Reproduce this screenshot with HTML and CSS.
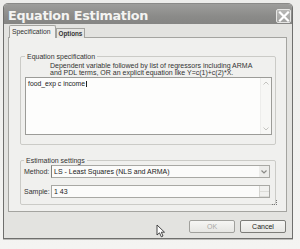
FILE: index.html
```html
<!DOCTYPE html>
<html>
<head>
<meta charset="utf-8">
<link rel="stylesheet" href="styles.css">
</head>
<body>
<div class="stage">
  <div class="window">
    <div class="titlebar">
      <span class="title">Equation Estimation</span>
      <span class="close"><svg width="12" height="11" viewBox="0 0 12 11"><path d="M2 1.5 L10 9.5 M10 1.5 L2 9.5" stroke="#fff" stroke-width="2.2" stroke-linecap="square"/></svg></span>
    </div>
    <div class="body">
      <div class="tabs">
        <div class="tab active">Specification</div>
        <div class="tab">Options</div>
      </div>
      <div class="panel">
        <fieldset class="group g1">
          <legend>Equation specification</legend>
          <p class="desc">Dependent variable followed by list of regressors including ARMA<br>and PDL terms, OR an explicit equation like Y=c(1)+c(2)*X.</p>
          <div class="textarea">
            <span class="val">food_exp c income<span class="caret"></span></span>
            <div class="vscroll">
              <svg width="8" height="6" viewBox="0 0 8 6"><path d="M1.5 4.5 L4 2 L6.5 4.5" fill="none" stroke="#c4c4c0" stroke-width="1"/></svg>
              <svg width="8" height="6" viewBox="0 0 8 6"><path d="M1.5 1.5 L4 4 L6.5 1.5" fill="none" stroke="#c4c4c0" stroke-width="1"/></svg>
            </div>
          </div>
        </fieldset>
        <fieldset class="group g2">
          <legend>Estimation settings</legend>
          <div class="row">
            <span class="lbl">Method:</span>
            <div class="select"><span class="val">LS - Least Squares (NLS and ARMA)</span>
              <span class="drop"><svg width="8" height="6" viewBox="0 0 8 6"><path d="M1.5 1.5 L4 4 L6.5 1.5" fill="none" stroke="#8a8a86" stroke-width="1.2"/></svg></span>
            </div>
          </div>
          <div class="row r2">
            <span class="lbl">Sample:</span>
            <div class="input"><span class="val">1 43</span>
              <span class="spin"><span></span><span></span></span>
            </div>
          </div>
        </fieldset>
        <span class="grip"></span>
      </div>
      <div class="buttons">
        <div class="btn disabled">OK</div>
        <div class="btn">Cancel</div>
      </div>
    </div>
  </div>
  <svg class="pointer" width="10" height="14" viewBox="0 0 10 14"><path d="M1 1 L1 11 L3.5 8.8 L5.3 12.8 L7 12 L5.3 8.2 L8.5 8.2 Z" fill="#fff" stroke="#333" stroke-width="0.9" stroke-linejoin="round"/></svg>
</div>
</body>
</html>
```

FILE: styles.css
```css
html, body {
  margin: 0;
  padding: 0;
}
body {
  background: #f1f1ef;
  font-family: "Liberation Sans", Arial, sans-serif;
  color: #2e2e2e;
}
.stage {
  position: relative;
  width: 300px;
  height: 249px;
  overflow: hidden;
  background: linear-gradient(#ededeb, #f4f4f2);
  padding: 3px 0 0 3px;
  box-sizing: border-box;
}
.window {
  width: 290px;
  height: 236px;
  box-sizing: border-box;
  border: 1px solid #6f6f6d;
  border-top-color: #8a8a88;
  border-radius: 5px 5px 0 0;
  background: #e3e3e0;
  display: flex;
  flex-direction: column;
  box-shadow: 0 1px 0 #bdbdba;
}
.titlebar {
  height: 20px;
  flex: none;
  background: linear-gradient(#9d9d9b, #8b8b89 60%, #858583);
  border-radius: 4px 4px 0 0;
  display: flex;
  align-items: center;
  justify-content: space-between;
  padding: 0 1px 0 4px;
}
.title {
  font-family: "DejaVu Sans", sans-serif;
  font-weight: bold;
  font-size: 12.8px;
  letter-spacing: -0.3px;
  color: #f4f4f2;
  margin-top: 2px;
}
.close {
  width: 15px;
  height: 14px;
  box-sizing: border-box;
  border: 1px solid #e6e6e4;
  border-radius: 2px;
  background: linear-gradient(#b9b9b7, #a2a2a0);
  display: flex;
  align-items: center;
  justify-content: center;
  margin-top: 4px;
}
.body {
  flex: 1;
  display: flex;
  flex-direction: column;
  padding: 2px 5px 4px 4px;
}
.tabs {
  height: 12px;
  display: flex;
  align-items: flex-end;
  padding-left: 1px;
  position: relative;
  z-index: 1;
  margin-bottom: -1px;
}
.tab {
  font-size: 6.8px;
  height: 9px;
  line-height: 9px;
  padding: 0 2px;
  border: 1px solid #a4a4a0;
  border-bottom: none;
  background: #e6e6e3;
  color: #333;
}
.tab.active {
  height: 12px;
  line-height: 11px;
  background: #f0f0ee;
  padding: 0 4px 0 2px;
  border-radius: 2px 2px 0 0;
}
.tab:not(.active) {
  font-weight: bold;
  font-size: 6.3px;
}
.panel {
  height: 175px;
  box-sizing: border-box;
  border: 1px solid #a4a4a0;
  background: #f0f0ee;
  padding: 14px 10px 0 11px;
  position: relative;
}
.group {
  margin: 0;
  border: 1px solid #cbcbc7;
  border-radius: 2px;
  padding: 0 3px 0 4px;
  min-width: 0;
}
.group legend {
  font-size: 7px;
  line-height: 9px;
  padding: 0 2px;
  margin-left: 0;
  color: #333;
}
.g1 {
  height: 93px;
  box-sizing: border-box;
}
.desc {
  margin: 1px 0 1px 25px;
  font-size: 7px;
  line-height: 7px;
  white-space: nowrap;
  color: #333;
}
.textarea {
  height: 58px;
  box-sizing: border-box;
  border: 1px solid #9c9c98;
  background: #fdfdfc;
  display: flex;
  justify-content: space-between;
}
.textarea .val {
  font-size: 6.8px;
  padding: 2px 0 0 2px;
  color: #222;
}
.caret {
  display: inline-block;
  width: 1px;
  height: 6px;
  background: #222;
  vertical-align: -1px;
  margin-left: 1px;
}
.vscroll {
  width: 10px;
  background: #f7f7f5;
  border-left: 1px solid #ededeb;
  display: flex;
  flex-direction: column;
  justify-content: space-between;
  align-items: center;
  padding: 2px 0;
}
.g2 {
  margin-top: 11px;
  height: 49px;
  box-sizing: border-box;
  padding: 0 5px 0 3px;
}
.row {
  display: flex;
  align-items: center;
  height: 13px;
}
.row.r2 {
  margin-top: 7px;
}
.lbl {
  font-size: 7px;
  width: 27px;
  flex: none;
  color: #333;
}
.select, .input {
  flex: 1;
  height: 13px;
  box-sizing: border-box;
  border: 1px solid #a8a8a4;
  background: #fbfbfa;
  display: flex;
  align-items: center;
  justify-content: space-between;
  font-size: 7px;
  color: #222;
}
.select .val, .input .val {
  padding-left: 2px;
}
.select {
  border-left-color: #7e7e7a;
}
.drop {
  width: 10px;
  height: 11px;
  background: #ececea;
  display: flex;
  align-items: center;
  justify-content: center;
}
.spin {
  width: 9px;
  height: 11px;
  display: flex;
  flex-direction: column;
  border-left: 1px solid #d4d4d0;
}
.spin span {
  flex: 1;
  background: #f0f0ee;
  border-bottom: 1px solid #dcdcd8;
}
.grip {
  position: absolute;
  right: 9px;
  bottom: 6px;
  width: 4px;
  height: 4px;
  border-right: 1px dotted #777;
  border-bottom: 1px dotted #777;
}
.buttons {
  display: flex;
  justify-content: flex-end;
  gap: 5px;
  margin-top: 8px;
  padding-right: 1px;
}
.btn {
  width: 46px;
  height: 13px;
  box-sizing: border-box;
  border: 1px solid #7c7c78;
  border-radius: 2px;
  background: linear-gradient(#f6f6f4, #e6e6e3);
  font-size: 7px;
  line-height: 11px;
  text-align: center;
  color: #222;
}
.btn.disabled {
  color: #a8a8a6;
  border-color: #a0a09c;
}
.pointer {
  position: absolute;
  left: 156px;
  top: 224px;
}
```
